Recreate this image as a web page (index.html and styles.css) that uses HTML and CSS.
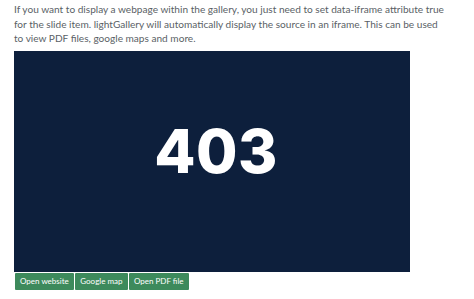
FILE: index.html
```html
<!DOCTYPE html>
<html>
<head>
<meta charset="utf-8">
<link rel="stylesheet" href="styles.css">
</head>
<body>
<div class="page">
  <p class="intro">If you want to display a webpage within the gallery, you just need to set data-iframe attribute true<br>for the slide item. lightGallery will automatically display the source in an iframe. This can be used<br>to view PDF files, google maps and more.</p>
  <div class="frame">
    <span class="code">403</span>
  </div>
  <div class="buttons">
    <a class="btn">Open website</a>
    <a class="btn">Google map</a>
    <a class="btn">Open PDF file</a>
  </div>
</div>
</body>
</html>
```
FILE: styles.css
```css
html, body {
  margin: 0;
  padding: 0;
  background: #ffffff;
}
.page {
  padding: 2px 0 0 14px;
  width: 396px;
  font-family: "Lato", "Liberation Sans", sans-serif;
}
.intro {
  margin: 0 0 5px 0;
  width: 430px;
  white-space: nowrap;
  font-size: 10.1px;
  line-height: 14.5px;
  color: #5a5f66;
}
.frame {
  height: 221px;
  background: #0d1f3c;
  display: flex;
  align-items: center;
  justify-content: center;
  padding: 0 0 21px 8px;
  box-sizing: border-box;
}
.code {
  font-family: "Inter", sans-serif;
  font-weight: 800;
  font-size: 60px;
  line-height: 1;
  color: #ffffff;
  letter-spacing: 0.5px;
}
.buttons {
  display: flex;
  gap: 1.5px;
  padding-top: 1px;
  padding-left: 1px;
}
.btn {
  display: block;
  height: 17px;
  line-height: 17px;
  padding: 0 5px;
  font-size: 8px;
  color: #ffffff;
  background: #3d8a5c;
  border-radius: 1px;
}
```
